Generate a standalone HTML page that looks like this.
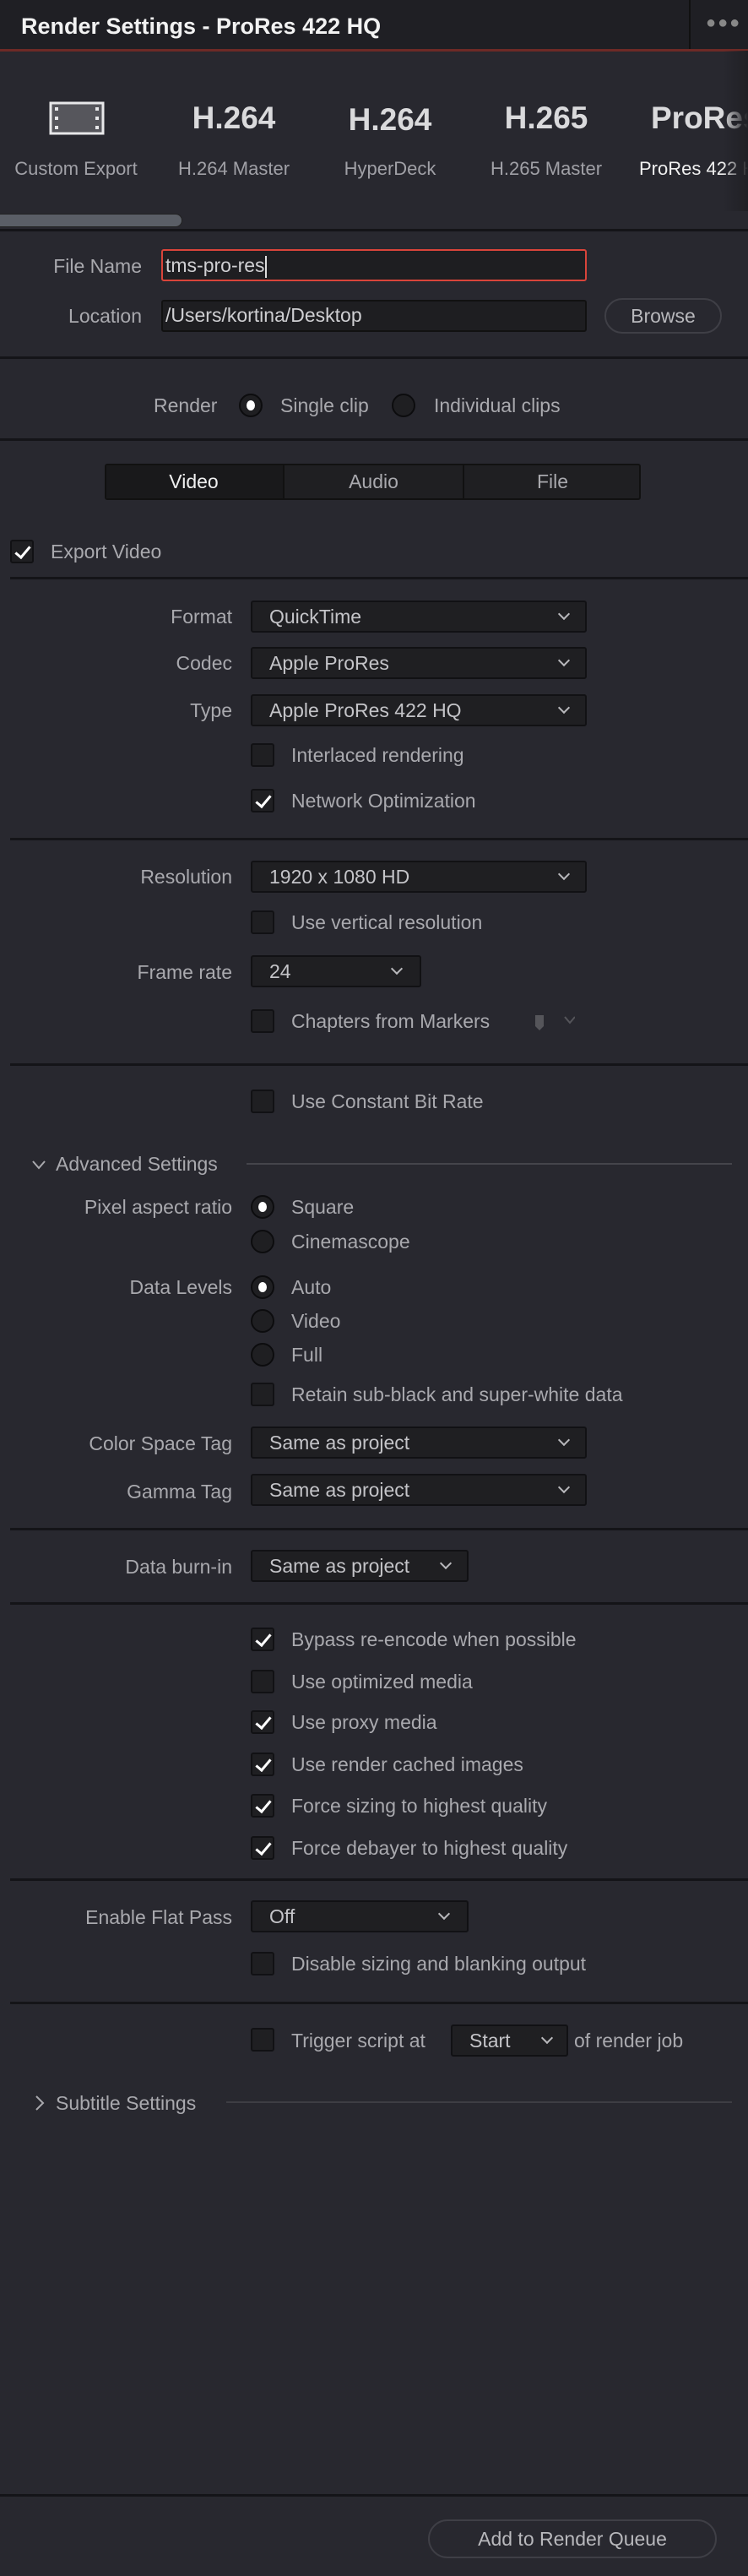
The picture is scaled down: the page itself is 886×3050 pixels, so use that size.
<!DOCTYPE html>
<html><head><meta charset="utf-8">
<style>
*{margin:0;padding:0;box-sizing:border-box}
body{width:886px;height:3050px;background:#28282f;font-family:"Liberation Sans",sans-serif;color:#a9a9ae;position:relative;overflow:hidden;font-size:23px}
div,span{position:absolute}
.t{line-height:30px;white-space:nowrap}
.lbl{left:0;width:275px;text-align:right;line-height:30px;white-space:nowrap}
.sep{left:12px;right:0;height:3px;background:#141418}
.sepf{left:0;right:0;height:3px;background:#141418}
.dd{left:297px;height:38px;background:#1f1f22;border:2px solid #111114;border-radius:3px;color:#c4c4c8}
.dd .v{left:20px;top:2px;line-height:30px;white-space:nowrap}
.chev{width:10px;height:10px;border-right:2px solid #b8b8bc;border-bottom:2px solid #b8b8bc;transform:rotate(45deg);top:9px}
.cb{left:297px;width:28px;height:28px;background:#1f1f22;border:2px solid #111114;border-radius:3px}
.cb.on::after{content:"";position:absolute;left:8px;top:2px;width:7px;height:15px;border-right:3px solid #fff;border-bottom:3px solid #fff;transform:rotate(40deg)}
.rd{width:28px;height:28px;border-radius:50%;background:#1f1f22;border:2px solid #0c0c0e}
.rd.on::after{content:"";position:absolute;left:7px;top:6px;width:10px;height:12px;border-radius:50%;background:#fff}
.ct{left:345px;line-height:30px;white-space:nowrap}
.pt{font-size:37px;line-height:40px;color:#dadadc;font-weight:bold;text-align:center;white-space:nowrap}
</style></head><body>
<div style="left:0;top:0;width:886px;height:60px;background:#1f1f24"></div>
<div style="left:0;top:58px;width:886px;height:3px;background:#6e2a26"></div>
<div class="t" style="left:25px;top:16px;font-size:27px;font-weight:bold;color:#f2f2f2">Render Settings - ProRes 422 HQ</div>
<div style="left:816px;top:0;width:2px;height:58px;background:#111"></div>
<div class="t" style="left:836px;top:12px;font-size:20px;color:#888;letter-spacing:2px">●●●</div>

<svg style="position:absolute;left:58px;top:120px" width="66" height="40" viewBox="0 0 66 40"><rect x="2" y="2" width="62" height="36" fill="#56565c" stroke="#e8e8ea" stroke-width="3"/><g fill="#e8e8ea"><rect x="7" y="7" width="4" height="4"/><rect x="7" y="18" width="4" height="4"/><rect x="7" y="29" width="4" height="4"/><rect x="55" y="7" width="4" height="4"/><rect x="55" y="18" width="4" height="4"/><rect x="55" y="29" width="4" height="4"/></g></svg>
<div class="pt" style="left:222px;top:120px;width:110px">H.264</div>
<div class="pt" style="left:407px;top:122px;width:110px">H.264</div>
<div class="pt" style="left:592px;top:120px;width:110px">H.265</div>
<div class="pt" style="left:771px;top:120px;text-align:left">ProRes</div>
<div class="t" style="left:0;top:185px;width:180px;text-align:center;font-size:22px;color:#a0a0a6">Custom Export</div>
<div class="t" style="left:197px;top:185px;width:160px;text-align:center;font-size:22px;color:#a0a0a6">H.264 Master</div>
<div class="t" style="left:382px;top:185px;width:160px;text-align:center;font-size:22px;color:#a0a0a6">HyperDeck</div>
<div class="t" style="left:567px;top:185px;width:160px;text-align:center;font-size:22px;color:#a0a0a6">H.265 Master</div>
<div class="t" style="left:757px;top:185px;font-size:22px;color:#f0f0f0">ProRes 422 HQ</div>
<div style="left:856px;top:60px;width:30px;height:190px;background:linear-gradient(to right,rgba(40,40,47,0),#202025)"></div>
<div style="left:-10px;top:253px;width:226px;height:16px;background:#5a5e66;border-radius:8px;border:1px solid #222"></div>
<div class="sepf" style="top:271px"></div>

<div class="lbl" style="width:168px;top:300px">File Name</div>
<div style="left:191px;top:295px;width:504px;height:38px;background:#1e1e21;border:2px solid #d9443a;border-radius:3px"></div>
<div class="t" style="left:196px;top:299px;color:#cfcfd2">tms-pro-res<span style="position:relative;display:inline-block;width:2px;height:26px;background:#ddd;vertical-align:middle"></span></div>
<div class="lbl" style="width:168px;top:359px">Location</div>
<div style="left:191px;top:355px;width:504px;height:38px;background:#1e1e21;border:2px solid #111;border-radius:3px"></div>
<div class="t" style="left:196px;top:358px;color:#cfcfd2">/Users/kortina/Desktop</div>
<div style="left:716px;top:353px;width:139px;height:42px;border:2px solid #3f3f46;border-radius:21px"></div>
<div class="t" style="left:716px;top:359px;width:139px;text-align:center;color:#b8b8bc">Browse</div>
<div class="sepf" style="top:422px"></div>

<div class="t" style="left:182px;top:465px">Render</div>
<div class="rd on" style="left:283px;top:466px"></div>
<div class="t" style="left:332px;top:465px">Single clip</div>
<div class="rd" style="left:464px;top:466px"></div>
<div class="t" style="left:514px;top:465px">Individual clips</div>
<div class="sepf" style="top:519px"></div>

<div style="left:124px;top:549px;width:635px;height:43px;background:#1f1f22;border:2px solid #111;border-radius:3px"></div>
<div style="left:126px;top:551px;width:209px;height:39px;background:#19191b"></div>
<div style="left:335px;top:551px;width:2px;height:39px;background:#111"></div>
<div style="left:548px;top:551px;width:2px;height:39px;background:#111"></div>
<div class="t" style="left:124px;top:555px;width:211px;text-align:center;color:#f0f0f0">Video</div>
<div class="t" style="left:337px;top:555px;width:211px;text-align:center">Audio</div>
<div class="t" style="left:550px;top:555px;width:209px;text-align:center">File</div>

<div class="cb on" style="left:12px;top:639px"></div>
<div class="t" style="left:60px;top:638px">Export Video</div>
<div class="sep" style="top:683px"></div>

<div class="lbl" style="top:715px">Format</div>
<div class="dd" style="top:711px;width:398px"><div class="v">QuickTime</div><div class="chev" style="right:20px"></div></div>
<div class="lbl" style="top:770px">Codec</div>
<div class="dd" style="top:766px;width:398px"><div class="v">Apple ProRes</div><div class="chev" style="right:20px"></div></div>
<div class="lbl" style="top:826px">Type</div>
<div class="dd" style="top:822px;width:398px"><div class="v">Apple ProRes 422 HQ</div><div class="chev" style="right:20px"></div></div>
<div class="cb" style="top:880px"></div><div class="ct" style="top:879px">Interlaced rendering</div>
<div class="cb on" style="top:934px"></div><div class="ct" style="top:933px">Network Optimization</div>
<div class="sep" style="top:992px"></div>

<div class="lbl" style="top:1023px">Resolution</div>
<div class="dd" style="top:1019px;width:398px"><div class="v">1920 x 1080 HD</div><div class="chev" style="right:20px"></div></div>
<div class="cb" style="top:1078px"></div><div class="ct" style="top:1077px">Use vertical resolution</div>
<div class="lbl" style="top:1136px">Frame rate</div>
<div class="dd" style="top:1131px;width:202px"><div class="v">24</div><div class="chev" style="right:22px"></div></div>
<div class="cb" style="top:1195px"></div><div class="ct" style="top:1194px">Chapters from Markers</div>
<svg style="position:absolute;left:633px;top:1200px" width="48" height="22"><path d="M1 2 h10 v13 l-5 5 l-5 -5z" fill="#55555a"/><path d="M42 4 l6 7 l6 -7" transform="translate(-6,0)" stroke="#55555a" stroke-width="2" fill="none"/></svg>
<div class="sep" style="top:1259px"></div>

<div class="cb" style="top:1290px"></div><div class="ct" style="top:1289px">Use Constant Bit Rate</div>

<svg style="position:absolute;left:37px;top:1372px" width="20" height="14"><path d="M2 3 l7 8 l7 -8" stroke="#a9a9ae" stroke-width="2" fill="none"/></svg>
<div class="t" style="left:66px;top:1363px">Advanced Settings</div>
<div style="left:292px;top:1377px;width:575px;height:2px;background:#45454b"></div>
<div class="lbl" style="top:1414px">Pixel aspect ratio</div>
<div class="rd on" style="left:297px;top:1415px"></div><div class="ct" style="top:1414px">Square</div>
<div class="rd" style="left:297px;top:1456px"></div><div class="ct" style="top:1455px">Cinemascope</div>
<div class="lbl" style="top:1509px">Data Levels</div>
<div class="rd on" style="left:297px;top:1510px"></div><div class="ct" style="top:1509px">Auto</div>
<div class="rd" style="left:297px;top:1550px"></div><div class="ct" style="top:1549px">Video</div>
<div class="rd" style="left:297px;top:1590px"></div><div class="ct" style="top:1589px">Full</div>
<div class="cb" style="top:1637px"></div><div class="ct" style="top:1636px">Retain sub-black and super-white data</div>
<div class="lbl" style="top:1694px">Color Space Tag</div>
<div class="dd" style="top:1689px;width:398px"><div class="v">Same as project</div><div class="chev" style="right:20px"></div></div>
<div class="lbl" style="top:1751px">Gamma Tag</div>
<div class="dd" style="top:1745px;width:398px"><div class="v">Same as project</div><div class="chev" style="right:20px"></div></div>
<div class="sep" style="top:1809px"></div>

<div class="lbl" style="top:1840px">Data burn-in</div>
<div class="dd" style="top:1835px;width:258px"><div class="v">Same as project</div><div class="chev" style="right:20px"></div></div>
<div class="sep" style="top:1897px"></div>

<div class="cb on" style="top:1927px"></div><div class="ct" style="top:1926px">Bypass re-encode when possible</div>
<div class="cb" style="top:1977px"></div><div class="ct" style="top:1976px">Use optimized media</div>
<div class="cb on" style="top:2025px"></div><div class="ct" style="top:2024px">Use proxy media</div>
<div class="cb on" style="top:2075px"></div><div class="ct" style="top:2074px">Use render cached images</div>
<div class="cb on" style="top:2124px"></div><div class="ct" style="top:2123px">Force sizing to highest quality</div>
<div class="cb on" style="top:2174px"></div><div class="ct" style="top:2173px">Force debayer to highest quality</div>
<div class="sep" style="top:2224px"></div>

<div class="lbl" style="top:2255px">Enable Flat Pass</div>
<div class="dd" style="top:2250px;width:258px"><div class="v">Off</div><div class="chev" style="right:22px"></div></div>
<div class="cb" style="top:2311px"></div><div class="ct" style="top:2310px">Disable sizing and blanking output</div>
<div class="sep" style="top:2370px"></div>

<div class="cb" style="top:2401px"></div><div class="ct" style="top:2401px">Trigger script at</div>
<div class="dd" style="left:534px;top:2397px;width:139px"><div class="v">Start</div><div class="chev" style="right:18px"></div></div>
<div class="t" style="left:680px;top:2401px">of render job</div>

<svg style="position:absolute;left:40px;top:2480px" width="14" height="20"><path d="M3 2 l8 8 l-8 8" stroke="#a9a9ae" stroke-width="2" fill="none"/></svg>
<div class="t" style="left:66px;top:2475px">Subtitle Settings</div>
<div style="left:268px;top:2488px;width:599px;height:2px;background:#3e3e44"></div>

<div class="sepf" style="top:2953px"></div>
<div style="left:507px;top:2983px;width:342px;height:46px;border:2px solid #3f3f46;border-radius:23px"></div>
<div class="t" style="left:507px;top:2991px;width:342px;text-align:center;color:#b8b8bc">Add to Render Queue</div>
</body></html>
